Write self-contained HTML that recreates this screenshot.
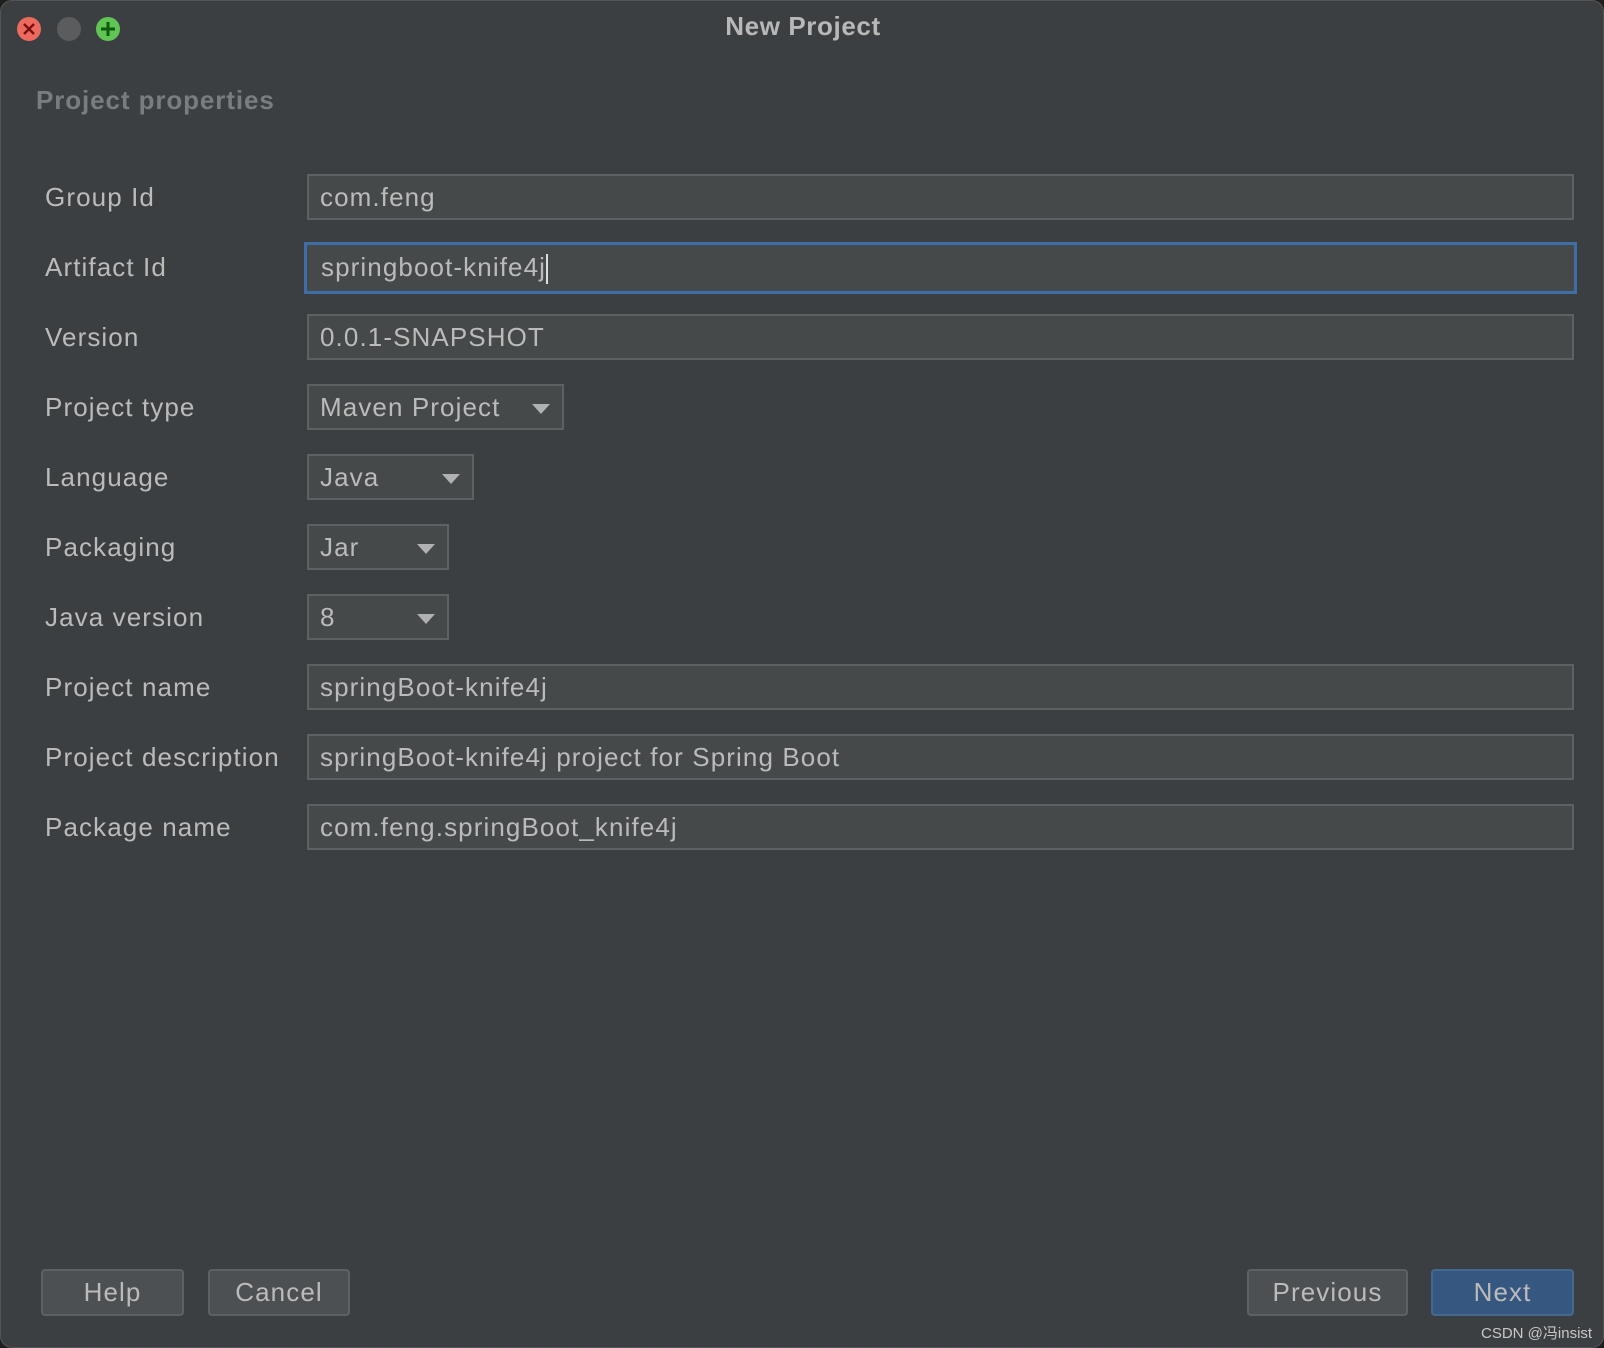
<!DOCTYPE html>
<html><head><meta charset="utf-8"><style>
*{box-sizing:border-box;margin:0;padding:0}
body{width:1604px;height:1348px;background:#1e1e1e;overflow:hidden;font-family:"Liberation Sans","Noto Sans CJK SC",sans-serif;letter-spacing:1.1px}
.win{position:absolute;left:0;top:0;width:1604px;height:1348px;background:#3c3f41;border-radius:12px;border:1px solid #555}
.tl{position:absolute;top:16px;width:24px;height:24px;border-radius:50%}
.t{position:absolute;left:0;width:1604px;top:10px;text-align:center;color:#b8b8b8;font-weight:bold;font-size:26px;letter-spacing:0.6px}
.pp{position:absolute;left:35px;top:84px;color:#7a7d80;font-weight:bold;font-size:26px;letter-spacing:0.9px}
.lbl{position:absolute;left:44px;color:#bbbbbb;font-size:26px}
.f{position:absolute;left:306px;height:46px;background:#45494a;border:2px solid #5e6163;color:#bbbbbb;font-size:26px;padding-left:11px;line-height:42px}
.dd::after{content:"";position:absolute;right:12px;top:18px;border-left:9px solid transparent;border-right:9px solid transparent;border-top:10px solid #afb1b3}
.b{position:absolute;top:1268px;height:47px;border:2px solid #5e6163;background:#4c5052;color:#bbbbbb;font-size:26px;text-align:center;line-height:43px;border-radius:4px}
</style></head><body><div class="win">
<div class="tl" style="left:16px;background:#ed6a5e"><svg width="24" height="24"><path d="M7 7L17 17M17 7L7 17" stroke="#7a1010" stroke-width="2.4"/></svg></div>
<div class="tl" style="left:56px;background:#5a5c5e"></div>
<div class="tl" style="left:95px;background:#61c554"><svg width="24" height="24"><path d="M12 5V19M5 12H19" stroke="#0c5c10" stroke-width="3"/></svg></div>
<div class="t">New Project</div>
<div class="pp">Project properties</div>

<div class="lbl" style="top:181px">Group Id</div>
<div class="f" style="top:173px;width:1267px">com.feng</div>
<div class="lbl" style="top:251px">Artifact Id</div>
<div class="f" style="top:241px;left:303px;width:1273px;height:52px;border:3px solid #3d6fa6;line-height:45px;padding-left:14px">springboot-knife4j<span style="display:inline-block;width:2px;height:30px;background:#ddd;vertical-align:middle"></span></div>
<div class="lbl" style="top:321px">Version</div>
<div class="f" style="top:313px;width:1267px">0.0.1-SNAPSHOT</div>
<div class="lbl" style="top:391px">Project type</div>
<div class="f dd" style="top:383px;width:257px">Maven Project</div>
<div class="lbl" style="top:461px">Language</div>
<div class="f dd" style="top:453px;width:167px">Java</div>
<div class="lbl" style="top:531px">Packaging</div>
<div class="f dd" style="top:523px;width:142px">Jar</div>
<div class="lbl" style="top:601px">Java version</div>
<div class="f dd" style="top:593px;width:142px">8</div>
<div class="lbl" style="top:671px">Project name</div>
<div class="f" style="top:663px;width:1267px">springBoot-knife4j</div>
<div class="lbl" style="top:741px">Project description</div>
<div class="f" style="top:733px;width:1267px">springBoot-knife4j project for Spring Boot</div>
<div class="lbl" style="top:811px">Package name</div>
<div class="f" style="top:803px;width:1267px">com.feng.springBoot_knife4j</div>

<div class="b" style="left:40px;width:143px">Help</div>
<div class="b" style="left:207px;width:142px">Cancel</div>
<div class="b" style="left:1246px;width:161px">Previous</div>
<div class="b" style="left:1430px;width:143px;background:#365880;border-color:#43698f">Next</div>
<div style="position:absolute;left:1480px;top:1321px;color:#c8c8c8;font-size:15px;letter-spacing:0">CSDN @冯insist</div>
</div></body></html>
